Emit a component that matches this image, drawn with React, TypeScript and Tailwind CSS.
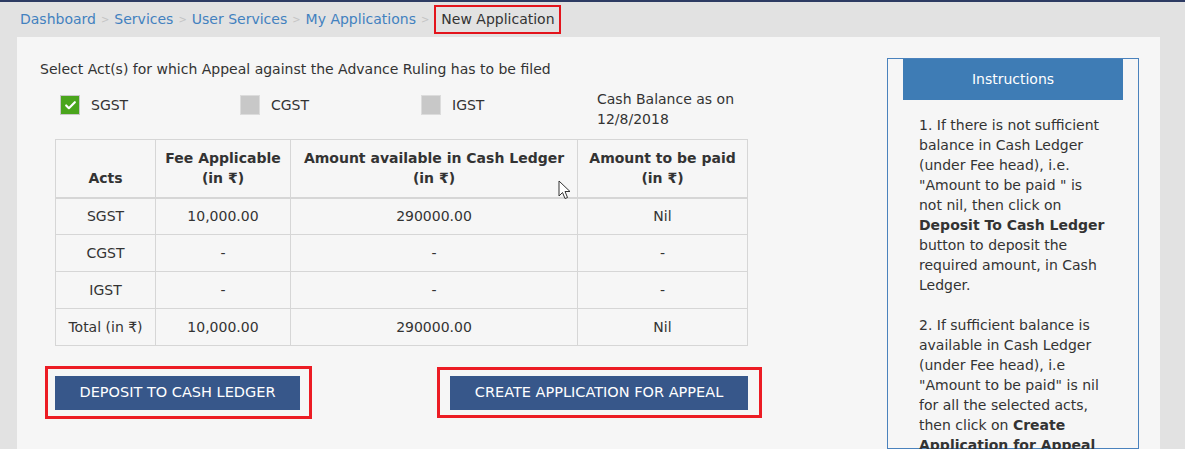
import { Check } from "lucide-react";

const crumbs = ["Dashboard", "Services", "User Services", "My Applications"];

const rows = [
  { act: "SGST", fee: "10,000.00", avail: "290000.00", pay: "Nil" },
  { act: "CGST", fee: "-", avail: "-", pay: "-" },
  { act: "IGST", fee: "-", avail: "-", pay: "-" },
  { act: "Total (in ₹)", fee: "10,000.00", avail: "290000.00", pay: "Nil" },
];

const acts = [
  { name: "SGST", checked: true, w: "w-[180px]" },
  { name: "CGST", checked: false, w: "w-[181px]" },
  { name: "IGST", checked: false, w: "w-[176px]" },
];

const App = () => {
  return (
    <div className="min-h-screen bg-[#e2e2e2] border-t-2 border-[#2d3b63] text-[14px] text-[#333] font-['DejaVu_Sans',Verdana,sans-serif]">
      {/* Breadcrumb */}
      <div className="h-[35px] flex items-center pl-5">
        {crumbs.map((c) => (
          <span key={c} className="flex items-center">
            <span className="text-[#4281bf]">{c}</span>
            <span className="text-[#c4c4c4] text-[10px] mx-[5px]">&gt;</span>
          </span>
        ))}
        <span className="border-2 border-[#e3141c] pl-[5px] pr-1 py-[2px] text-[#333]">New Application</span>
      </div>

      {/* Main panel */}
      <div className="relative ml-[17px] mr-[25px] bg-[#f6f6f6] flex h-[412px] overflow-hidden">
        <div className="flex-1 pl-[23px] pt-[22px]">
          <p className="leading-5">Select Act(s) for which Appeal against the Advance Ruling has to be filed</p>

          <div className="flex mt-[10px] ml-5">
            {acts.map((a) => (
              <div key={a.name} className={`${a.w} flex items-center gap-[11px] h-5 mt-[6px]`}>
                {a.checked ? (
                  <span className="w-5 h-5 bg-[#4aa51c] border border-[#c9c9c9] flex items-center justify-center">
                    <Check className="w-[13px] h-[13px] text-white" strokeWidth={4} />
                  </span>
                ) : (
                  <span className="w-5 h-5 bg-[#c8c8c8] border border-[#dcdcdc]" />
                )}
                <span>{a.name}</span>
              </div>
            ))}
            <div className="leading-5">
              <div>Cash Balance as on</div>
              <div>12/8/2018</div>
            </div>
          </div>

          <table className="ml-[15px] mt-[10px] border-collapse text-center">
            <thead>
              <tr className="border-b-2 border-[#d6d6d6]">
                <th className="w-[100px] h-[58px] align-bottom pb-[9px] border border-[#d6d6d6] leading-5">Acts</th>
                <th className="w-[135px] align-bottom pb-[9px] border border-[#d6d6d6] leading-5">
                  Fee Applicable
                  <br />
                  (in ₹)
                </th>
                <th className="w-[287px] align-bottom pb-[9px] border border-[#d6d6d6] leading-5">
                  Amount available in Cash Ledger
                  <br />
                  (in ₹)
                </th>
                <th className="w-[170px] align-bottom pb-[9px] border border-[#d6d6d6] leading-5">
                  Amount to be paid
                  <br />
                  (in ₹)
                </th>
              </tr>
            </thead>
            <tbody>
              {rows.map((r) => (
                <tr key={r.act} className="h-[37px]">
                  <td className="border border-[#d6d6d6]">{r.act}</td>
                  <td className="border border-[#d6d6d6]">{r.fee}</td>
                  <td className="border border-[#d6d6d6]">{r.avail}</td>
                  <td className="border border-[#d6d6d6]">{r.pay}</td>
                </tr>
              ))}
            </tbody>
          </table>

          <div className="flex mt-[20px] ml-[5px]">
            <div className="border-[3px] border-[#ec1c24] pl-[7px] pr-[9px] pt-[7px] pb-[6px]">
              <button className="w-[245px] h-[34px] bg-[#37578a] text-white text-[14.5px]">DEPOSIT TO CASH LEDGER</button>
            </div>
            <div className="ml-[125px] mt-[1px] border-[3px] border-[#ec1c24] pl-[10px] pr-[11px] pt-[6px] pb-[5px] h-[51px]">
              <button className="w-[298px] h-[34px] bg-[#37578a] text-white text-[14.5px]">CREATE APPLICATION FOR APPEAL</button>
            </div>
          </div>
        </div>

        {/* Instructions */}
        <div className="w-[252px] mt-[21px] mr-[21px] border border-[#4a82bd] px-[15px]">
          <div className="h-[41px] bg-[#3e7cb5] text-white flex items-center justify-center">Instructions</div>
          <div className="pl-[16px] pt-[15px] leading-5 whitespace-nowrap">
            <p>
              1. If there is not sufficient
              <br />
              balance in Cash Ledger
              <br />
              (under Fee head), i.e.
              <br />
              "Amount to be paid " is
              <br />
              not nil, then click on
              <br />
              <b>Deposit To Cash Ledger</b>
              <br />
              button to deposit the
              <br />
              required amount, in Cash
              <br />
              Ledger.
            </p>
            <p className="mt-5">
              2. If sufficient balance is
              <br />
              available in Cash Ledger
              <br />
              (under Fee head), i.e
              <br />
              "Amount to be paid" is nil
              <br />
              for all the selected acts,
              <br />
              then click on <b>Create</b>
              <br />
              <b>Application for Appeal</b>
            </p>
          </div>
        </div>

        {/* mouse pointer */}
        <svg className="absolute left-[541px] top-[143px]" width="13" height="20" viewBox="0 0 13 20">
          <path d="M1 1 L1 16 L4.5 12.5 L7 18.5 L9.5 17.5 L7 11.5 L12 11.5 Z" fill="#fff" stroke="#333" strokeWidth="1" />
        </svg>
      </div>
    </div>
  );
};

export default App;
